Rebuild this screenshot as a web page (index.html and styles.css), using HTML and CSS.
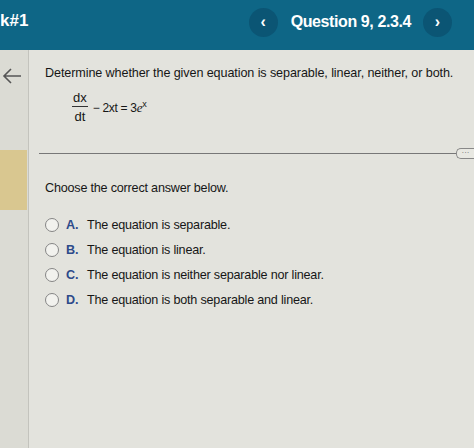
FILE: index.html
```html
<!DOCTYPE html>
<html>
<head>
<meta charset="utf-8">
<link rel="stylesheet" href="styles.css">
</head>
<body>
<div class="page">
  <header class="topbar">
    <div class="title">k#1</div>
    <div class="nav">
      <span class="navbtn">&#8249;</span>
      <span class="qtitle">Question 9, 2.3.4</span>
      <span class="navbtn">&#8250;</span>
    </div>
  </header>
  <div class="main">
    <aside class="side">
      <svg class="back" width="20" height="16" viewBox="0 0 20 16"><path d="M19 8H2M9 1L2 8l7 7" fill="none" stroke="#555" stroke-width="1.6"/></svg>
      <div class="mark"></div>
    </aside>
    <section class="content">
      <p class="prompt">Determine whether the given equation is separable, linear, neither, or both.</p>
      <div class="eq">
        <span class="frac"><span class="num">dx</span><span class="den">dt</span></span>
        <span class="rest">&#8722; 2xt = 3<i>e</i><sup>x</sup></span>
      </div>
      <div class="divider"><span class="rule"></span><span class="more">&middot;&middot;&middot;</span></div>
      <p class="choose">Choose the correct answer below.</p>
      <ul class="opts">
        <li><span class="radio"></span><b>A.</b><span>The equation is separable.</span></li>
        <li><span class="radio"></span><b>B.</b><span>The equation is linear.</span></li>
        <li><span class="radio"></span><b>C.</b><span>The equation is neither separable nor linear.</span></li>
        <li><span class="radio"></span><b>D.</b><span>The equation is both separable and linear.</span></li>
      </ul>
    </section>
  </div>
</div>
</body>
</html>
```
FILE: styles.css
```css
html, body { margin: 0; padding: 0; }
body { font-family: "Liberation Sans", Arial, sans-serif; color: #161616; background: #e3e3dd; width: 474px; height: 448px; overflow: hidden; }
.page { display: flex; flex-direction: column; height: 448px; }
.topbar { height: 50px; background: #0e6686; display: flex; align-items: center; justify-content: space-between; color: #fff; flex: none; }
.title { font-weight: bold; font-size: 17px; margin-left: 0; margin-top: -9px; }
.nav { display: flex; align-items: center; margin-right: 22px; margin-top: -6px; }
.navbtn { width: 29px; height: 29px; border-radius: 50%; background: #0b5574; display: flex; align-items: center; justify-content: center; font-size: 16px; font-weight: bold; line-height: 1; }
.qtitle { font-weight: bold; font-size: 16px; margin: 0 12px 0 13px; letter-spacing: -0.4px; }
.main { flex: 1; display: flex; }
.side { width: 28px; background: #dbdbd4; border-right: 1.5px solid #c3c3bd; display: flex; flex-direction: column; flex: none; }
.back { margin: 18px 0 0 2px; }
.mark { height: 60px; background: #d9c790; margin-top: 66px; width: 27px; }
.content { flex: 1; padding: 15px 0 0 16px; }
.prompt { margin: 0; font-size: 12.6px; line-height: 16px; letter-spacing: -0.1px; }
.eq { display: flex; align-items: center; margin: 9px 0 0 27px; font-size: 13px; }
.frac { display: inline-flex; flex-direction: column; align-items: center; }
.num { padding: 0 1px 1px; border-bottom: 1px solid #333; }
.den { padding-top: 2px; }
.rest { margin-left: 5px; font-size: 12px; letter-spacing: -0.3px; }
.rest i { font-family: "Liberation Serif", serif; font-size: 13px; }
.rest sup { font-size: 9px; }
.divider { display: flex; align-items: center; margin: 24px 0 0 -6px; }
.rule { flex: 1; height: 1px; background: #777; }
.more { width: 17px; height: 9px; border: 1px solid #888; border-right: none; border-radius: 5px 0 0 5px; font-size: 8px; line-height: 8px; color: #666; text-align: center; background: #e8e8e2; }
.choose { margin: 22px 0 0; font-size: 12.6px; letter-spacing: -0.2px; }
.opts { list-style: none; margin: 17px 0 0; padding: 0 0 0 0; font-size: 12.6px; letter-spacing: -0.2px; }
.opts li { display: flex; align-items: center; height: 25px; }
.radio { width: 12px; height: 12px; border: 1.3px solid #858585; border-radius: 50%; margin: 0 7px 0 0; background: #f2f2ee; flex: none; }
.opts b { color: #2d4a8a; width: 21px; letter-spacing: 0; }
```
